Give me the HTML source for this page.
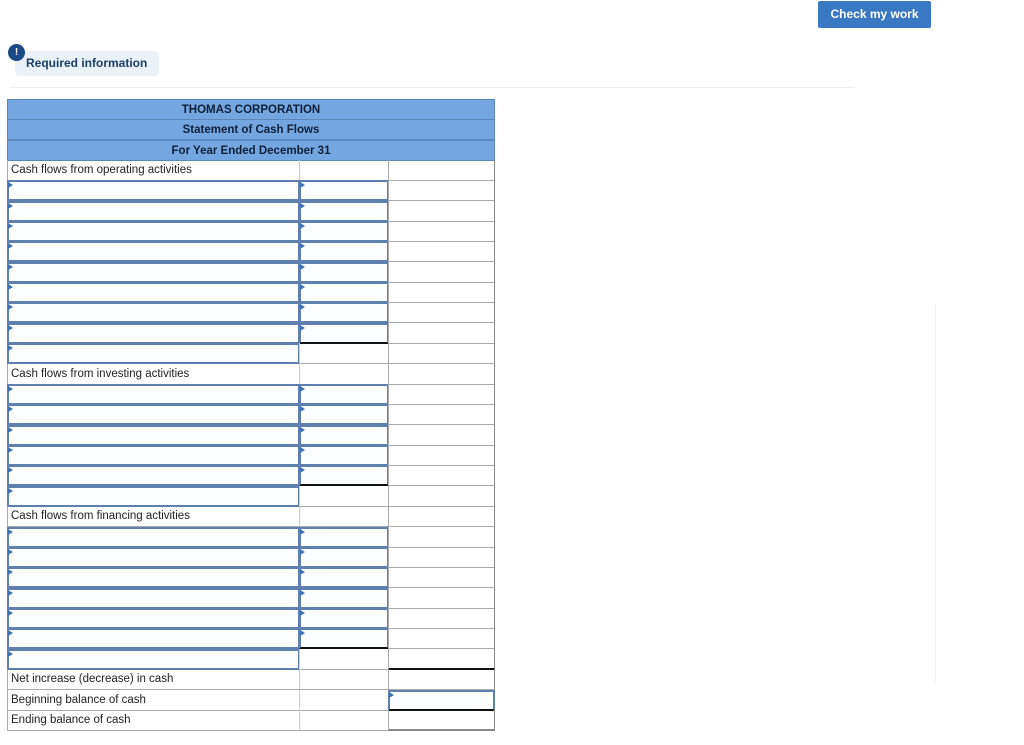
<!DOCTYPE html>
<html><head><style>
body{margin:0;width:1024px;height:745px;background:#fff;font-family:"Liberation Sans",Arial,sans-serif;position:relative;overflow:hidden}
.btn{position:absolute;left:818px;top:1px;width:113px;height:27px;background:#3b78c3;border-radius:2px;color:#fff;font-weight:bold;font-size:12px;line-height:27px;text-align:center}
.req{position:absolute;left:15px;top:51px;width:144px;height:25px;background:#eaf1f9;border-radius:4px;color:#1d3e66;font-weight:bold;font-size:12px;line-height:25px;text-indent:11px}
.ic{position:absolute;z-index:2;left:8px;top:44px;width:17px;height:17px;border-radius:50%;background:#1c4a86;color:#fff;font-size:10px;font-weight:bold;text-align:center;line-height:17px}
.hr{position:absolute;left:10px;top:87px;width:845px;height:1px;background:#eee}
.vr{position:absolute;left:935px;top:305px;width:1px;height:380px;background:#f3f3f3}
.h{position:absolute;left:7px;width:488px;height:21px;background:#74a7e0;border:1px solid #5a86b8;text-align:center;font-weight:bold;font-size:11.5px;color:#0f2038;line-height:20px;box-sizing:border-box}
.r{position:absolute;left:7px;width:488px;height:21px}
.c{position:absolute;top:0;height:21px;box-sizing:border-box;border:1px solid #aaa;border-top:none;font-size:11.5px;line-height:21px;color:#222}
.c1{left:0;width:293px;padding-left:3px}
.c2{left:292px;width:90px;border-left-color:#ccc}
.c3{left:381px;width:107px;border-left-color:#aaa;border-right:1px solid #888}
.in{border:2px solid #5f7fae;background:#fbfdff}
.in:before{content:"";position:absolute;left:-1px;top:0;border-left:5px solid #3d74b8;border-top:3px solid transparent;border-bottom:3px solid transparent}
.bb{border-bottom:2px solid #111}
</style></head><body>
<div class="btn">Check my work</div>
<div class="req">Required information</div>
<div class="ic">!</div>
<div class="hr"></div><div class="vr"></div>
<div class="h" style="top:99px">THOMAS CORPORATION</div>
<div class="h" style="top:119px">Statement of Cash Flows</div>
<div class="h" style="top:140px">For Year Ended December 31</div>

<div class="r" style="top:160px"><div class="c c1">Cash flows from operating activities</div><div class="c c2"></div><div class="c c3"></div></div>
<div class="r" style="top:180px"><div class="c c1 in"></div><div class="c c2 in"></div><div class="c c3"></div></div>
<div class="r" style="top:201px"><div class="c c1 in"></div><div class="c c2 in"></div><div class="c c3"></div></div>
<div class="r" style="top:221px"><div class="c c1 in"></div><div class="c c2 in"></div><div class="c c3"></div></div>
<div class="r" style="top:241px"><div class="c c1 in"></div><div class="c c2 in"></div><div class="c c3"></div></div>
<div class="r" style="top:262px"><div class="c c1 in"></div><div class="c c2 in"></div><div class="c c3"></div></div>
<div class="r" style="top:282px"><div class="c c1 in"></div><div class="c c2 in"></div><div class="c c3"></div></div>
<div class="r" style="top:302px"><div class="c c1 in"></div><div class="c c2 in"></div><div class="c c3"></div></div>
<div class="r" style="top:323px"><div class="c c1 in"></div><div class="c c2 in bb"></div><div class="c c3"></div></div>
<div class="r" style="top:343px"><div class="c c1 in"></div><div class="c c2"></div><div class="c c3"></div></div>

<div class="r" style="top:364px"><div class="c c1">Cash flows from investing activities</div><div class="c c2"></div><div class="c c3"></div></div>
<div class="r" style="top:384px"><div class="c c1 in"></div><div class="c c2 in"></div><div class="c c3"></div></div>
<div class="r" style="top:404px"><div class="c c1 in"></div><div class="c c2 in"></div><div class="c c3"></div></div>
<div class="r" style="top:425px"><div class="c c1 in"></div><div class="c c2 in"></div><div class="c c3"></div></div>
<div class="r" style="top:445px"><div class="c c1 in"></div><div class="c c2 in"></div><div class="c c3"></div></div>
<div class="r" style="top:465px"><div class="c c1 in"></div><div class="c c2 in bb"></div><div class="c c3"></div></div>
<div class="r" style="top:486px"><div class="c c1 in"></div><div class="c c2"></div><div class="c c3"></div></div>

<div class="r" style="top:506px"><div class="c c1">Cash flows from financing activities</div><div class="c c2"></div><div class="c c3"></div></div>
<div class="r" style="top:527px"><div class="c c1 in"></div><div class="c c2 in"></div><div class="c c3"></div></div>
<div class="r" style="top:547px"><div class="c c1 in"></div><div class="c c2 in"></div><div class="c c3"></div></div>
<div class="r" style="top:567px"><div class="c c1 in"></div><div class="c c2 in"></div><div class="c c3"></div></div>
<div class="r" style="top:588px"><div class="c c1 in"></div><div class="c c2 in"></div><div class="c c3"></div></div>
<div class="r" style="top:608px"><div class="c c1 in"></div><div class="c c2 in"></div><div class="c c3"></div></div>
<div class="r" style="top:628px"><div class="c c1 in"></div><div class="c c2 in bb"></div><div class="c c3"></div></div>
<div class="r" style="top:649px"><div class="c c1 in"></div><div class="c c2"></div><div class="c c3 bb"></div></div>

<div class="r" style="top:669px"><div class="c c1">Net increase (decrease) in cash</div><div class="c c2"></div><div class="c c3"></div></div>
<div class="r" style="top:690px"><div class="c c1">Beginning balance of cash</div><div class="c c2"></div><div class="c c3 in bb"></div></div>
<div class="r" style="top:710px"><div class="c c1">Ending balance of cash</div><div class="c c2"></div><div class="c c3" style="border-bottom:2px solid #888"></div></div>
</body></html>
